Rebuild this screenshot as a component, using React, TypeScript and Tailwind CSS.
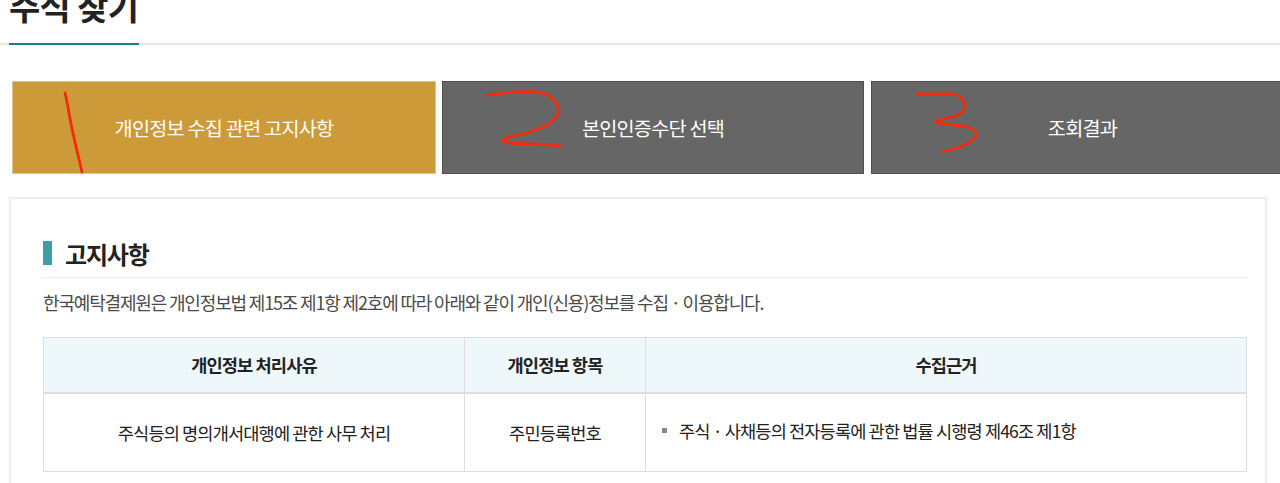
const font = "[font-family:'Noto_Sans_CJK_KR','Noto_Sans',sans-serif]"

function Tab({ label, active, width }: { label: string; active?: boolean; width: string }) {
    return (
        <div
            className={`flex h-[93px] shrink-0 items-center justify-center border text-[19.7px] tracking-[-0.04em] text-white ${width} ${
                active ? "border-[#e3c48c] bg-[#cd9a3a]" : "border-[#4d4d4d] bg-[#666666]"
            }`}
        >
            {label}
        </div>
    )
}

export default function App() {
    return (
        <div className={`relative h-[483px] w-[1280px] overflow-hidden bg-white ${font}`}>
            {/* page title */}
            <div className="flow-root h-[45px] border-b-2 border-[#e6e6e6]">
                <h1 className="-mt-[18px] ml-[9px] h-[63px] w-[130px] border-b-2 border-[#17808c] text-[34px] leading-[48px] font-bold tracking-[-0.02em] whitespace-nowrap text-[#222222]">
                    주식 찾기
                </h1>
            </div>

            {/* steps */}
            <div className="mt-[36px] flex gap-[6px] pl-[12px]">
                <Tab active label="개인정보 수집 관련 고지사항" width="w-[424px]" />
                <Tab label="본인인증수단 선택" width="w-[422px]" />
                <Tab label="조회결과" width="ml-px w-[423px]" />
            </div>

            {/* notice card */}
            <div className="mt-[23px] ml-[9px] h-[320px] w-[1258px] border-2 border-[#eeeeee] pt-[42px] pr-[18px] pl-[32px]">
                <div className="flex h-[37px] items-start gap-[13px] border-b border-[#eeeeee]">
                    <span className="h-[24px] w-[9px] bg-[#3e9ea8]" />
                    <h2 className="text-[24px] leading-[26px] font-bold tracking-[-0.05em] text-[#222222]">고지사항</h2>
                </div>
                <p className="mt-[11px] text-[18px] leading-[26px] tracking-[-0.065em] text-[#4a4a4a]">
                    한국예탁결제원은 개인정보법 제15조 제1항 제2호에 따라 아래와 같이 개인(신용)정보를 수집 · 이용합니다.
                </p>

                <table className="mt-[22px] w-[1204px] table-fixed border-collapse text-[17.6px] tracking-[-0.05em] text-[#222222]">
                    <colgroup>
                        <col className="w-[421px]" />
                        <col className="w-[181px]" />
                        <col />
                    </colgroup>
                    <thead>
                        <tr className="h-[55px] border-b-2 border-[#dddddd] bg-[#eef7fa] font-bold">
                            <th className="border border-b-2 border-[#dddddd]">개인정보 처리사유</th>
                            <th className="border border-b-2 border-[#dddddd]">개인정보 항목</th>
                            <th className="border border-b-2 border-[#dddddd]">수집근거</th>
                        </tr>
                    </thead>
                    <tbody>
                        <tr className="h-[79px]">
                            <td className="border border-[#dddddd] pt-[2px] text-center">주식등의 명의개서대행에 관한 사무 처리</td>
                            <td className="border border-[#dddddd] pt-[2px] text-center">주민등록번호</td>
                            <td className="border border-[#dddddd] pb-[2px] pl-[16px]">
                                <div className="flex items-center gap-[12px]">
                                    <span className="mb-[2px] size-[5px] bg-[#888888]" />
                                    주식 · 사채등의 전자등록에 관한 법률 시행령 제46조 제1항
                                </div>
                            </td>
                        </tr>
                    </tbody>
                </table>
            </div>

            {/* hand-drawn step numbers */}
            <svg className="pointer-events-none absolute inset-0" fill="none" height="483" stroke="#f42a0a" strokeLinecap="round" strokeLinejoin="round" strokeWidth="2.8" width="1280">
                <path d="M65 93 C66 97 67 102 68 107 C71 128 77 150 82 172" />
                <path d="M487 95 C497 94 505 93 513 92 C522 92 530 91 537 92 C544 93 549 95 552 98 C556 102 559 107 559 112 C558 117 554 120 550 123 C545 126 539 129 533 131 C527 133 520 135 513 136 C509 137 505 138 503 140 C503 142 506 143 510 143 C519 144 528 144 537 144 C545 145 553 145 560 146" />
                <path d="M917 94 C929 94 941 94 953 94 C958 95 961 97 963 100 C965 102 965 105 965 107 C965 110 963 112 960 114 C956 116 951 117 947 118 C942 119 938 120 935 122 C938 123 943 124 947 124 C954 125 961 126 967 127 C972 128 975 130 977 133 C977 136 975 138 973 140 C969 143 965 145 960 147 C954 149 948 150 942 152" />
            </svg>
        </div>
    )
}
